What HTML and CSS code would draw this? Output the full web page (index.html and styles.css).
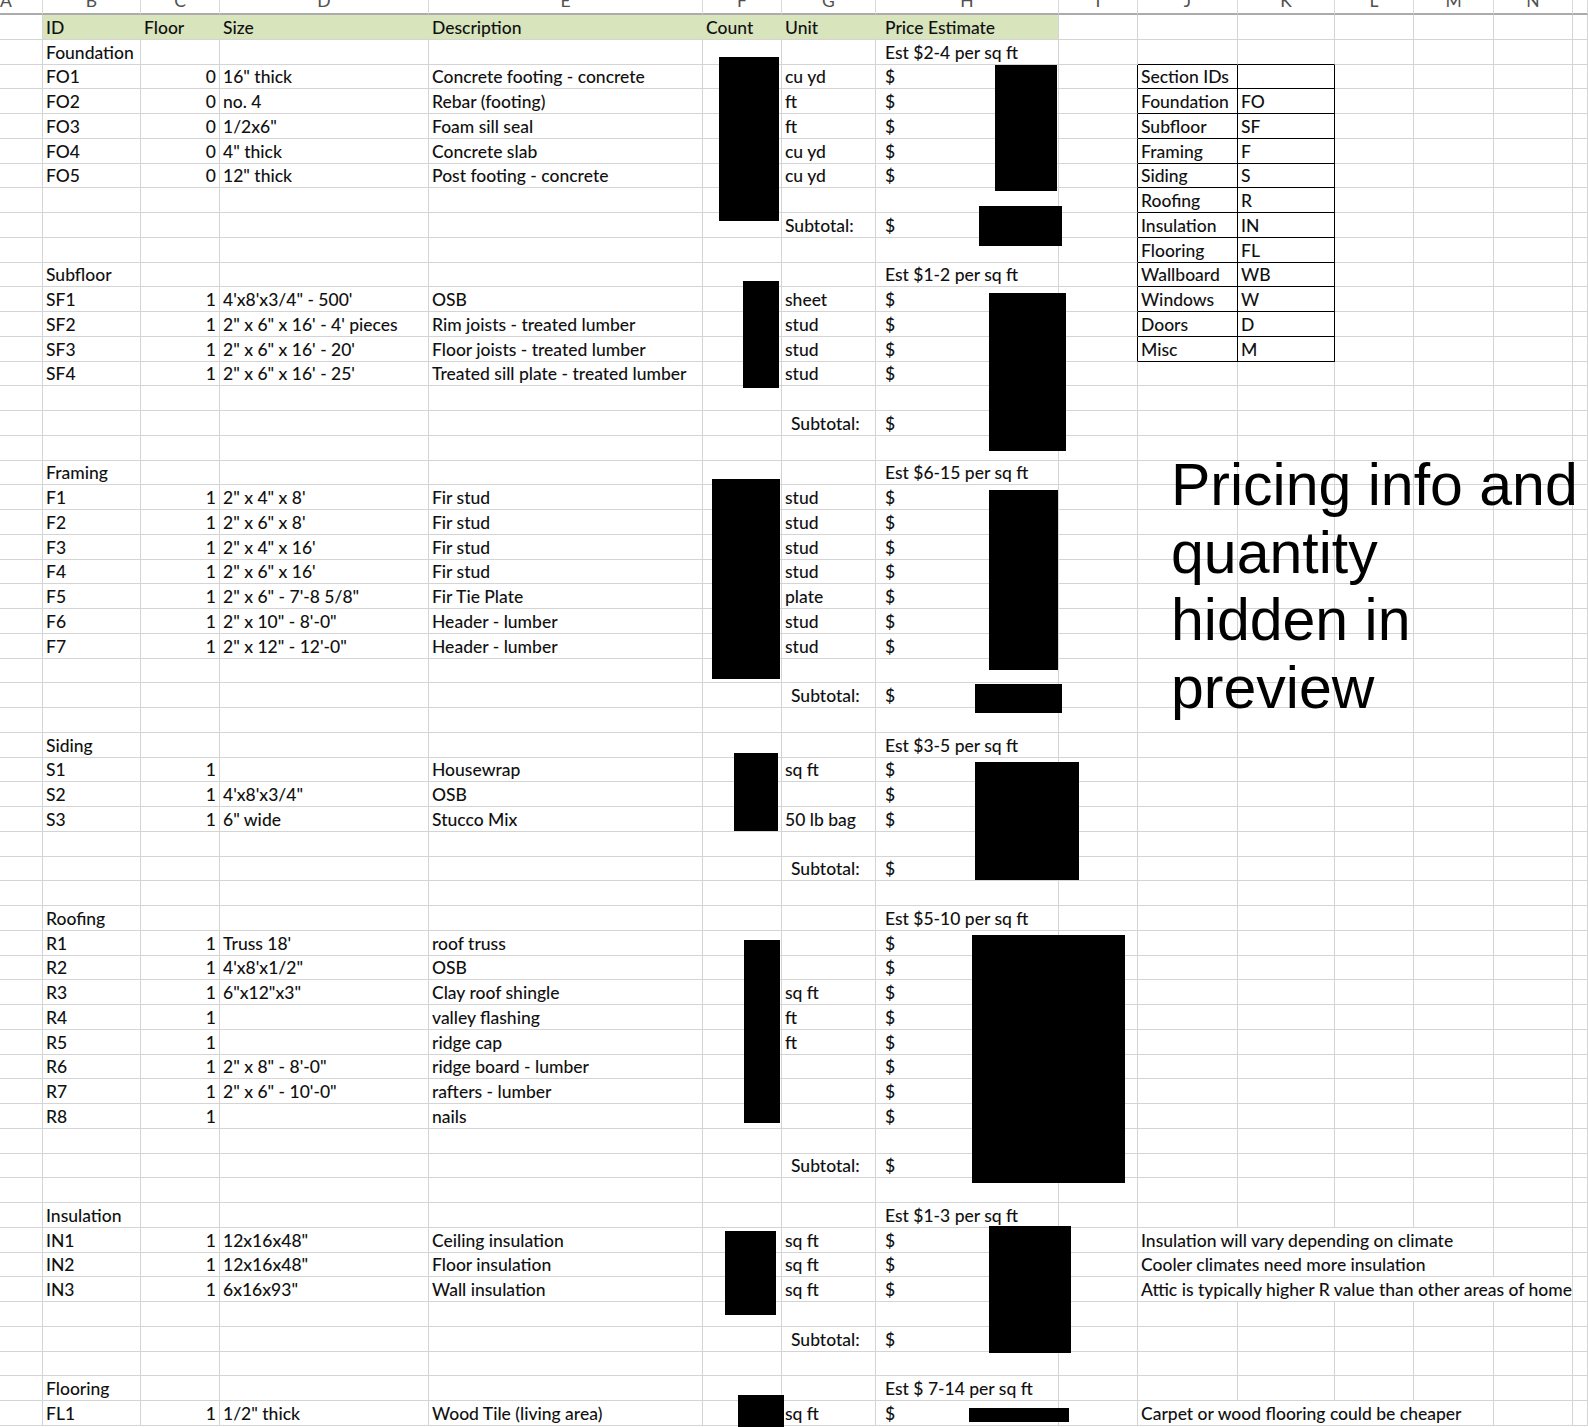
FILE: index.html
```html
<!DOCTYPE html>
<html lang="en">
<head>
<meta charset="utf-8">
<title>Materials estimate</title>
<link rel="stylesheet" href="styles.css">
</head>
<body>
<div class="sheet">
<table class="grid">
<colgroup>
<col class="ca"><col class="cb"><col class="cc"><col class="cd"><col class="ce"><col class="cf"><col class="cg"><col class="ch"><col class="ci"><col class="cj"><col class="ck"><col class="cl"><col class="cm"><col class="cn"><col class="co">
</colgroup>
<thead>
<tr><th class="la">A</th><th>B</th><th>C</th><th>D</th><th>E</th><th>F</th><th>G</th><th>H</th><th>I</th><th>J</th><th>K</th><th>L</th><th>M</th><th>N</th><th></th></tr>
</thead>
<tbody>
<tr><td></td><td class="g">ID</td><td class="g">Floor</td><td class="g">Size</td><td class="g">Description</td><td class="g">Count</td><td class="g">Unit</td><td class="g ge h">Price Estimate</td><td></td><td></td><td></td><td></td><td></td><td></td><td></td></tr>
<tr><td></td><td>Foundation</td><td></td><td></td><td></td><td></td><td></td><td class="h">Est $2-4 per sq ft</td><td></td><td class="tt"></td><td class="tt"></td><td></td><td></td><td></td><td></td></tr>
<tr><td></td><td>FO1</td><td class="n">0</td><td>16" thick</td><td>Concrete footing - concrete</td><td></td><td>cu yd</td><td class="h">$</td><td class="tl"></td><td class="tb">Section IDs</td><td class="tb"></td><td></td><td></td><td></td><td></td></tr>
<tr><td></td><td>FO2</td><td class="n">0</td><td>no. 4</td><td>Rebar (footing)</td><td></td><td>ft</td><td class="h">$</td><td class="tl"></td><td class="tb">Foundation</td><td class="tb">FO</td><td></td><td></td><td></td><td></td></tr>
<tr><td></td><td>FO3</td><td class="n">0</td><td>1/2x6"</td><td>Foam sill seal</td><td></td><td>ft</td><td class="h">$</td><td class="tl"></td><td class="tb">Subfloor</td><td class="tb">SF</td><td></td><td></td><td></td><td></td></tr>
<tr><td></td><td>FO4</td><td class="n">0</td><td>4" thick</td><td>Concrete slab</td><td></td><td>cu yd</td><td class="h">$</td><td class="tl"></td><td class="tb">Framing</td><td class="tb">F</td><td></td><td></td><td></td><td></td></tr>
<tr><td></td><td>FO5</td><td class="n">0</td><td>12" thick</td><td>Post footing - concrete</td><td></td><td>cu yd</td><td class="h">$</td><td class="tl"></td><td class="tb">Siding</td><td class="tb">S</td><td></td><td></td><td></td><td></td></tr>
<tr><td></td><td></td><td></td><td></td><td></td><td></td><td></td><td></td><td class="tl"></td><td class="tb">Roofing</td><td class="tb">R</td><td></td><td></td><td></td><td></td></tr>
<tr><td></td><td></td><td></td><td></td><td></td><td></td><td>Subtotal:</td><td class="h">$</td><td class="tl"></td><td class="tb">Insulation</td><td class="tb">IN</td><td></td><td></td><td></td><td></td></tr>
<tr><td></td><td></td><td></td><td></td><td></td><td></td><td></td><td></td><td class="tl"></td><td class="tb">Flooring</td><td class="tb">FL</td><td></td><td></td><td></td><td></td></tr>
<tr><td></td><td>Subfloor</td><td></td><td></td><td></td><td></td><td></td><td class="h">Est $1-2 per sq ft</td><td class="tl"></td><td class="tb">Wallboard</td><td class="tb">WB</td><td></td><td></td><td></td><td></td></tr>
<tr><td></td><td>SF1</td><td class="n">1</td><td>4'x8'x3/4" - 500'</td><td>OSB</td><td></td><td>sheet</td><td class="h">$</td><td class="tl"></td><td class="tb">Windows</td><td class="tb">W</td><td></td><td></td><td></td><td></td></tr>
<tr><td></td><td>SF2</td><td class="n">1</td><td>2" x 6" x 16' - 4' pieces</td><td>Rim joists - treated lumber</td><td></td><td>stud</td><td class="h">$</td><td class="tl"></td><td class="tb">Doors</td><td class="tb">D</td><td></td><td></td><td></td><td></td></tr>
<tr><td></td><td>SF3</td><td class="n">1</td><td>2" x 6" x 16' - 20'</td><td>Floor joists - treated lumber</td><td></td><td>stud</td><td class="h">$</td><td class="tl"></td><td class="tb">Misc</td><td class="tb">M</td><td></td><td></td><td></td><td></td></tr>
<tr><td></td><td>SF4</td><td class="n">1</td><td>2" x 6" x 16' - 25'</td><td>Treated sill plate - treated lumber</td><td></td><td>stud</td><td class="h">$</td><td></td><td></td><td></td><td></td><td></td><td></td><td></td></tr>
<tr><td></td><td></td><td></td><td></td><td></td><td></td><td></td><td></td><td></td><td></td><td></td><td></td><td></td><td></td><td></td></tr>
<tr><td></td><td></td><td></td><td></td><td></td><td></td><td class="st">Subtotal:</td><td class="h">$</td><td></td><td></td><td></td><td></td><td></td><td></td><td></td></tr>
<tr><td></td><td></td><td></td><td></td><td></td><td></td><td></td><td></td><td></td><td></td><td></td><td></td><td></td><td></td><td></td></tr>
<tr><td></td><td>Framing</td><td></td><td></td><td></td><td></td><td></td><td class="h">Est $6-15 per sq ft</td><td></td><td></td><td></td><td></td><td></td><td></td><td></td></tr>
<tr><td></td><td>F1</td><td class="n">1</td><td>2" x 4" x 8'</td><td>Fir stud</td><td></td><td>stud</td><td class="h">$</td><td></td><td></td><td></td><td></td><td></td><td></td><td></td></tr>
<tr><td></td><td>F2</td><td class="n">1</td><td>2" x 6" x 8'</td><td>Fir stud</td><td></td><td>stud</td><td class="h">$</td><td></td><td></td><td></td><td></td><td></td><td></td><td></td></tr>
<tr><td></td><td>F3</td><td class="n">1</td><td>2" x 4" x 16'</td><td>Fir stud</td><td></td><td>stud</td><td class="h">$</td><td></td><td></td><td></td><td></td><td></td><td></td><td></td></tr>
<tr><td></td><td>F4</td><td class="n">1</td><td>2" x 6" x 16'</td><td>Fir stud</td><td></td><td>stud</td><td class="h">$</td><td></td><td></td><td></td><td></td><td></td><td></td><td></td></tr>
<tr><td></td><td>F5</td><td class="n">1</td><td>2" x 6" - 7'-8 5/8"</td><td>Fir Tie Plate</td><td></td><td>plate</td><td class="h">$</td><td></td><td></td><td></td><td></td><td></td><td></td><td></td></tr>
<tr><td></td><td>F6</td><td class="n">1</td><td>2" x 10" - 8'-0"</td><td>Header - lumber</td><td></td><td>stud</td><td class="h">$</td><td></td><td></td><td></td><td></td><td></td><td></td><td></td></tr>
<tr><td></td><td>F7</td><td class="n">1</td><td>2" x 12" - 12'-0"</td><td>Header - lumber</td><td></td><td>stud</td><td class="h">$</td><td></td><td></td><td></td><td></td><td></td><td></td><td></td></tr>
<tr><td></td><td></td><td></td><td></td><td></td><td></td><td></td><td></td><td></td><td></td><td></td><td></td><td></td><td></td><td></td></tr>
<tr><td></td><td></td><td></td><td></td><td></td><td></td><td class="st">Subtotal:</td><td class="h">$</td><td></td><td></td><td></td><td></td><td></td><td></td><td></td></tr>
<tr><td></td><td></td><td></td><td></td><td></td><td></td><td></td><td></td><td></td><td></td><td></td><td></td><td></td><td></td><td></td></tr>
<tr><td></td><td>Siding</td><td></td><td></td><td></td><td></td><td></td><td class="h">Est $3-5 per sq ft</td><td></td><td></td><td></td><td></td><td></td><td></td><td></td></tr>
<tr><td></td><td>S1</td><td class="n">1</td><td></td><td>Housewrap</td><td></td><td>sq ft</td><td class="h">$</td><td></td><td></td><td></td><td></td><td></td><td></td><td></td></tr>
<tr><td></td><td>S2</td><td class="n">1</td><td>4'x8'x3/4"</td><td>OSB</td><td></td><td></td><td class="h">$</td><td></td><td></td><td></td><td></td><td></td><td></td><td></td></tr>
<tr><td></td><td>S3</td><td class="n">1</td><td>6" wide</td><td>Stucco Mix</td><td></td><td>50 lb bag</td><td class="h">$</td><td></td><td></td><td></td><td></td><td></td><td></td><td></td></tr>
<tr><td></td><td></td><td></td><td></td><td></td><td></td><td></td><td></td><td></td><td></td><td></td><td></td><td></td><td></td><td></td></tr>
<tr><td></td><td></td><td></td><td></td><td></td><td></td><td class="st">Subtotal:</td><td class="h">$</td><td></td><td></td><td></td><td></td><td></td><td></td><td></td></tr>
<tr><td></td><td></td><td></td><td></td><td></td><td></td><td></td><td></td><td></td><td></td><td></td><td></td><td></td><td></td><td></td></tr>
<tr><td></td><td>Roofing</td><td></td><td></td><td></td><td></td><td></td><td class="h">Est $5-10 per sq ft</td><td></td><td></td><td></td><td></td><td></td><td></td><td></td></tr>
<tr><td></td><td>R1</td><td class="n">1</td><td>Truss 18'</td><td>roof truss</td><td></td><td></td><td class="h">$</td><td></td><td></td><td></td><td></td><td></td><td></td><td></td></tr>
<tr><td></td><td>R2</td><td class="n">1</td><td>4'x8'x1/2"</td><td>OSB</td><td></td><td></td><td class="h">$</td><td></td><td></td><td></td><td></td><td></td><td></td><td></td></tr>
<tr><td></td><td>R3</td><td class="n">1</td><td>6"x12"x3"</td><td>Clay roof shingle</td><td></td><td>sq ft</td><td class="h">$</td><td></td><td></td><td></td><td></td><td></td><td></td><td></td></tr>
<tr><td></td><td>R4</td><td class="n">1</td><td></td><td>valley flashing</td><td></td><td>ft</td><td class="h">$</td><td></td><td></td><td></td><td></td><td></td><td></td><td></td></tr>
<tr><td></td><td>R5</td><td class="n">1</td><td></td><td>ridge cap</td><td></td><td>ft</td><td class="h">$</td><td></td><td></td><td></td><td></td><td></td><td></td><td></td></tr>
<tr><td></td><td>R6</td><td class="n">1</td><td>2" x 8" - 8'-0"</td><td>ridge board - lumber</td><td></td><td></td><td class="h">$</td><td></td><td></td><td></td><td></td><td></td><td></td><td></td></tr>
<tr><td></td><td>R7</td><td class="n">1</td><td>2" x 6" - 10'-0"</td><td>rafters - lumber</td><td></td><td></td><td class="h">$</td><td></td><td></td><td></td><td></td><td></td><td></td><td></td></tr>
<tr><td></td><td>R8</td><td class="n">1</td><td></td><td>nails</td><td></td><td></td><td class="h">$</td><td></td><td></td><td></td><td></td><td></td><td></td><td></td></tr>
<tr><td></td><td></td><td></td><td></td><td></td><td></td><td></td><td></td><td></td><td></td><td></td><td></td><td></td><td></td><td></td></tr>
<tr><td></td><td></td><td></td><td></td><td></td><td></td><td class="st">Subtotal:</td><td class="h">$</td><td></td><td></td><td></td><td></td><td></td><td></td><td></td></tr>
<tr><td></td><td></td><td></td><td></td><td></td><td></td><td></td><td></td><td></td><td></td><td></td><td></td><td></td><td></td><td></td></tr>
<tr><td></td><td>Insulation</td><td></td><td></td><td></td><td></td><td></td><td class="h">Est $1-3 per sq ft</td><td></td><td></td><td></td><td></td><td></td><td></td><td></td></tr>
<tr><td></td><td>IN1</td><td class="n">1</td><td>12x16x48"</td><td>Ceiling insulation</td><td></td><td>sq ft</td><td class="h">$</td><td></td><td colspan="4">Insulation will vary depending on climate</td><td></td><td></td></tr>
<tr><td></td><td>IN2</td><td class="n">1</td><td>12x16x48"</td><td>Floor insulation</td><td></td><td>sq ft</td><td class="h">$</td><td></td><td colspan="4">Cooler climates need more insulation</td><td></td><td></td></tr>
<tr><td></td><td>IN3</td><td class="n">1</td><td>6x16x93"</td><td>Wall insulation</td><td></td><td>sq ft</td><td class="h">$</td><td></td><td colspan="5">Attic is typically higher R value than other areas of home</td><td></td></tr>
<tr><td></td><td></td><td></td><td></td><td></td><td></td><td></td><td></td><td></td><td></td><td></td><td></td><td></td><td></td><td></td></tr>
<tr><td></td><td></td><td></td><td></td><td></td><td></td><td class="st">Subtotal:</td><td class="h">$</td><td></td><td></td><td></td><td></td><td></td><td></td><td></td></tr>
<tr><td></td><td></td><td></td><td></td><td></td><td></td><td></td><td></td><td></td><td></td><td></td><td></td><td></td><td></td><td></td></tr>
<tr><td></td><td>Flooring</td><td></td><td></td><td></td><td></td><td></td><td class="h">Est $ 7-14 per sq ft</td><td></td><td></td><td></td><td></td><td></td><td></td><td></td></tr>
<tr><td></td><td>FL1</td><td class="n">1</td><td>1/2" thick</td><td>Wood Tile (living area)</td><td></td><td>sq ft</td><td class="h">$</td><td></td><td colspan="4">Carpet or wood flooring could be cheaper</td><td></td><td></td></tr>
</tbody>
</table>

<div class="redact x1"></div>
<div class="redact x2"></div>
<div class="redact x3"></div>
<div class="redact x4"></div>
<div class="redact x5"></div>
<div class="redact x6"></div>
<div class="redact x7"></div>
<div class="redact x8"></div>
<div class="redact x9"></div>
<div class="redact x10"></div>
<div class="redact x11"></div>
<div class="redact x12"></div>
<div class="redact x13"></div>
<div class="redact x14"></div>
<div class="redact x15"></div>
<div class="redact x16"></div>

<div class="note">Pricing info and<br>quantity<br>hidden in<br>preview</div>
</div>
</body>
</html>
```

FILE: styles.css
```css
html, body {
  margin: 0;
  padding: 0;
  background: #ffffff;
}

body {
  width: 1588px;
  height: 1427px;
  overflow: hidden;
  font-family: Lato, "Noto Sans", sans-serif;
  font-size: 17.5px;
  font-weight: 500;
  color: #111111;
}

.sheet {
  position: relative;
  width: 1588px;
  height: 1427px;
  overflow: hidden;
}

.grid {
  table-layout: fixed;
  width: 1588px;
  border-collapse: separate;
  border-spacing: 0;
}

.ca { width: 43px; }
.cb { width: 98px; }
.cc { width: 79px; }
.cd { width: 209px; }
.ce { width: 274px; }
.cf { width: 79px; }
.cg { width: 94px; }
.ch { width: 183px; }
.ci { width: 79px; }
.cj { width: 100px; }
.ck { width: 97px; }
.cl { width: 79px; }
.cm { width: 80px; }
.cn { width: 79px; }
.co { width: 15px; }

/* column letters strip */
.grid thead tr { height: 15px; }

.grid th {
  box-sizing: border-box;
  padding: 0;
  border-right: 1px solid #d9d9d9;
  border-bottom: 2px solid #ababab;
  vertical-align: top;
  line-height: 2.5px;
  font-weight: 400;
  color: #505050;
  text-align: center;
  overflow: hidden;
  white-space: nowrap;
}

.grid th.la {
  text-align: right;
  padding-right: 33px;
}

/* cells */
.grid tbody tr { height: 24.76px; }

.grid td {
  box-sizing: border-box;
  padding: 0 3px 1px 3px;
  border-right: 1px solid #d4d4d4;
  border-bottom: 1px solid #d4d4d4;
  vertical-align: bottom;
  line-height: 21px;
  white-space: nowrap;
  overflow: hidden;
}

.grid td.n { text-align: right; }
.grid td.h { padding-left: 9px; }
.grid td.st { padding-left: 9px; }

/* header fill */
.grid td.g {
  background: #d8e4bc;
  border-right-color: #d8e4bc;
}
.grid td.ge { border-right-color: #d4d4d4; }

/* Section IDs box */
.grid td.tt { border-bottom-color: #000000; }
.grid td.tl { border-right-color: #000000; }
.grid td.tb {
  border-right-color: #000000;
  border-bottom-color: #000000;
}

/* redaction blocks drawn over the sheet */
.redact {
  position: absolute;
  background: #000000;
}
.x1  { left: 719px; top: 57px;   width: 60px;  height: 164px; }
.x2  { left: 995px; top: 65px;   width: 62px;  height: 126px; }
.x3  { left: 979px; top: 206px;  width: 83px;  height: 40px; }
.x4  { left: 743px; top: 281px;  width: 36px;  height: 107px; }
.x5  { left: 989px; top: 293px;  width: 77px;  height: 158px; }
.x6  { left: 712px; top: 479px;  width: 68px;  height: 200px; }
.x7  { left: 989px; top: 490px;  width: 69px;  height: 180px; }
.x8  { left: 975px; top: 684px;  width: 87px;  height: 29px; }
.x9  { left: 734px; top: 753px;  width: 44px;  height: 78px; }
.x10 { left: 975px; top: 762px;  width: 104px; height: 118px; }
.x11 { left: 744px; top: 940px;  width: 36px;  height: 183px; }
.x12 { left: 972px; top: 935px;  width: 153px; height: 248px; }
.x13 { left: 725px; top: 1231px; width: 51px;  height: 84px; }
.x14 { left: 989px; top: 1226px; width: 82px;  height: 127px; }
.x15 { left: 738px; top: 1395px; width: 46px;  height: 32px; }
.x16 { left: 969px; top: 1408px; width: 100px; height: 14px; }

/* floating text box */
.note {
  position: absolute;
  left: 1171px;
  top: 452px;
  font-family: "Liberation Sans", Arial, sans-serif;
  font-size: 59px;
  line-height: 67.5px;
  color: #000000;
  white-space: nowrap;
}
```
